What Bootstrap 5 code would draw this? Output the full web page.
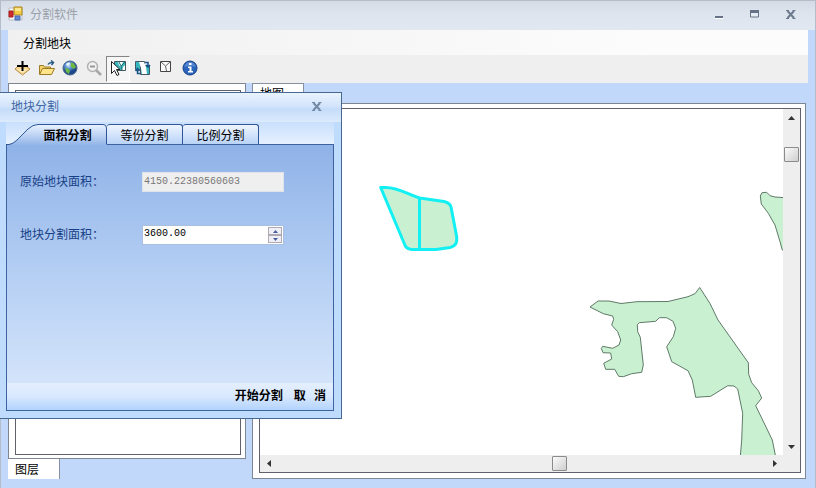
<!DOCTYPE html>
<html lang="zh-CN">
<head>
<meta charset="utf-8">
<meta name="viewport" content="width=device-width, initial-scale=1">
<title>分割软件</title>
<link href="https://cdn.jsdelivr.net/npm/bootstrap@5.3.0/dist/css/bootstrap.min.css" rel="stylesheet">
<style>
body { font-family: "Noto Sans CJK SC", sans-serif; font-size: 12px; line-height: 16px; color: #000; background: #c1d8fb; }
button, input { font: inherit; color: inherit; }
button { border: 0; padding: 0; background: none; }
svg { display: block; }
.app-window { border: 1px solid #b4bdca; padding-bottom: 9px; }
.app-title { height: 29px; padding: 0 6px 3px 7px; background: linear-gradient(#d5dbe5, #dde4ee 40%, #e1e8f1); color: #9a9fa8; }
.app-name { margin-left: 6px; }
.caption-btn { width: 36px; height: 24px; display: flex; align-items: center; justify-content: center; }
.app-content { padding: 0 7px; }
.menu-strip { height: 25px; padding-left: 15px; background: linear-gradient(90deg, #f0f0f0, #fcfcfc 80%); }
.tool-strip { height: 28px; padding: 0 2px; background: #efefef; }
.tool-btn { width: 24px; height: 26px; padding-bottom: 2px; display: flex; align-items: center; justify-content: center; border: 1px solid transparent; }
.tool-btn.pressed { border-color: #858585 #fff #fff #858585; background: #f6f6f6; }
.work-area { gap: 6px; }
.layer-pane { width: 238px; }
.layer-frame { border: 1px solid #7e8694; background: #fff; padding: 6px 4px 3px 6px; }
.inner-frame { border: 1px solid #62606a; background: #fff; }
.dock-tab { height: 20px; width: 52px; padding: 0 7px; text-align: left; background: #fff; border-right: 1px solid #8790a0; }
.map-tab { border: 1px solid #8790a0; border-bottom: 0; padding-bottom: 2px; }
.map-frame { border: 1px solid #7e8694; background: #fff; padding: 4px 4px 5px 6px; margin-right: 2px; }
.map-view { flex: 1 1 0; min-width: 0; min-height: 0; }
.bar-v { width: 17px; background: #eeeeee; }
.bar-h { height: 17px; background: #eeeeee; }
.bar-btn { width: 17px; height: 17px; display: flex; align-items: center; justify-content: center; }
.thumb { width: 15px; height: 15px; border: 1px solid #8b8b8b; border-radius: 1px; background: linear-gradient(135deg, #fafafa, #cfcfcf); }
.thumb-v { margin: 21px auto 0; }
.track-before { flex: 58; }
.track-after { flex: 42; }
.bar-corner { width: 17px; }
.split-dialog { position: absolute; left: 0; top: 92px; width: 342px; border: 1px solid #48698f; border-left: 0; padding: 0 7px 7px 6px; background: #bfdbfd; }
.dialog-title { height: 29px; margin: 0 -7px 0 -6px; padding: 0 19px 3px 11px; background: linear-gradient(#e9f3ff, #d3e5fb 45%, #c5dcf9 55%, #dcebfd); color: #3f66a3; }
.tab-strip { height: 22px; padding-top: 2px; background: linear-gradient(#c9dffc, #e6f1ff); }
.tab-first { width: 101px; margin-bottom: -1px; position: relative; z-index: 1; font-weight: 700; }
.tab-first svg { position: absolute; left: 0; top: 0; }
.tab-first span { position: relative; margin-left: 22px; }
.tab-other { width: 76px; border: 1px solid #2f5797; border-left: 0; border-bottom: 0; border-radius: 3px 3px 0 0; background: linear-gradient(#eef5ff, #b9d3f7); }
.tab-body { min-height: 267px; border: 1px solid #3d63a0; background: linear-gradient(#8fb2e7, #b2cdf3 45%, #d2e3fa 88%); color: #173f86; }
.form-rows { padding: 27px 13px 0; gap: 33px; }
.form-row { height: 20px; }
.form-row label { width: 122px; padding-bottom: 2px; }
.field { width: 142px; height: 20px; border: 1px solid #a9bfe0; background: #fff; }
.field input { border: 0; padding: 0 0 2px 1px; min-width: 0; width: 100%; background: transparent; color: #000; font-family: "Liberation Mono", monospace; font-size: 10px; outline: 0; }
.field.locked { background: #efefef; border-color: #dfe3ea; }
.field.locked input { color: #777; padding-bottom: 0; }
.spin { width: 15px; padding: 1px 1px 1px 0; }
.spin button { flex: 1; border: 1px solid #b0a9b4; background: #eef0f6; display: flex; align-items: center; justify-content: center; }
.dialog-actions { height: 27px; padding: 0 7px 3px; gap: 11px; background: linear-gradient(#e4effe, #d8e8fe 50%, #b2d3fd); color: #000; }
.dialog-actions button { font-weight: 700; white-space: pre; }
</style>
</head>
<body>
<div class="app-window position-relative min-vh-100 d-flex flex-column">
  <header class="app-title d-flex align-items-center">
    <svg width="16" height="16" viewBox="0 0 16 16" aria-hidden="true"><path d="M1 2h13v12H1z" fill="#f5f6f7" stroke="#b9bcc2"/><path d="M6 1h8v8H6z" fill="#f4cc45" stroke="#a98420"/><path d="M7 2h6v3H7z" fill="#ffe68b"/><path d="M1 5h4v6H1z" fill="#cf2929" stroke="#a52020"/><path d="M7 10h5v4H7z" fill="#6289d1" stroke="#466bb3"/></svg>
    <span class="app-name">分割软件</span>
    <div class="ms-auto d-flex">
      <button class="caption-btn" aria-label="最小化"><svg width="10" height="10"><path d="M1 7h8v2H1z" fill="#667386"/><path d="M1 9h8v1H1z" fill="#fff"/></svg></button>
      <button class="caption-btn" aria-label="最大化"><svg width="10" height="8"><path d="M.5 1.5h8v5.500h-8z" fill="#e7edf5" stroke="#667386"/><path d="M0 0h9v3H0z" fill="#667386"/></svg></button>
      <button class="caption-btn" aria-label="关闭"><svg width="10" height="9"><path d="M1.500 1l6.500 7M8 1L1.500 8" stroke="#6d7a8e" stroke-width="2"/><path d="M0 .5h3M6.500 .5h3M0 8.500h3M6.500 8.500h3" stroke="#6d7a8e"/></svg></button>
    </div>
  </header>
  <div class="app-content flex-grow-1 d-flex flex-column">
    <nav class="menu-strip d-flex align-items-center"><button>分割地块</button></nav>
    <div class="tool-strip d-flex align-items-center" role="toolbar">
      <button class="tool-btn" aria-label="添加图层"><svg width="17" height="16"><path d="M1 9l3-3h8l4 3-7.500 6z" fill="#f7d58e" stroke="#b78c4a"/><path d="M3 9h11l-5.500 4z" fill="#ffebb8"/><path d="M8.500 1v10M3 6h11" stroke="#000" stroke-width="2"/></svg></button>
      <button class="tool-btn" aria-label="打开"><svg width="17" height="16"><path d="M1.500 14V5.500h4l1 1.500h6v2" fill="#f4d36c" stroke="#9a7a22"/><path d="M1.500 14.500l3-6h12l-3 6z" fill="#ffe48a" stroke="#9a7a22"/><path d="M10 4.500c1-2 2-2.500 5-2M13 .5l2.500 2L13.500 5" fill="none" stroke="#285b87" stroke-width="1.500"/></svg></button>
      <button class="tool-btn" aria-label="全图"><svg width="16" height="16"><defs><radialGradient id="sea" cx=".4" cy=".3"><stop stop-color="#d8edff"/><stop offset=".5" stop-color="#5b92d2"/><stop offset="1" stop-color="#1c468c"/></radialGradient></defs><circle cx="8" cy="8" r="7" fill="url(#sea)" stroke="#4a6688"/><path d="M9 2.500l3 1 2 3.500-2 2-2-1-1.500-2zM3 8l3 .5 2 2-1 3.500-3-2z" fill="#6db845"/><path d="M4 4l3-1.500 1 1-3 2z" fill="#fff"/></svg></button>
      <button class="tool-btn" aria-label="缩小" disabled><svg width="16" height="16"><circle cx="6.500" cy="6.500" r="5" fill="#f1f1f1" stroke="#b2b2b2" stroke-width="1.500"/><path d="M4 6.500h5" stroke="#999" stroke-width="2"/><path d="M10 10l5 5" stroke="#a7a7a7" stroke-width="2.500"/></svg></button>
      <button class="tool-btn pressed" aria-label="选择要素" aria-pressed="true"><svg width="17" height="16"><path d="M4.500 1.500h11v9h-11z" fill="#3bb8bd" stroke="#44585c"/><path d="M8 2h5l-2 5-2-2zM13 7l2-2v5h-3z" fill="#fff"/><path d="M9 2l2 4 4-4M11 6l1 4" stroke="#1e6b74" fill="none"/><path d="M1.500 1.500v12l3-3 2.500 5 2-1-2.500-5H10z" fill="#fff" stroke="#222"/></svg></button>
      <button class="tool-btn" aria-label="切换选择"><svg width="17" height="16"><path d="M1.500 1.500h9v8h-9z" fill="#35b5bc" stroke="#456"/><path d="M6.500 5.500h9v9h-9z" fill="#35b5bc" stroke="#456"/><path d="M5 2h5l2 5 1 7H8L7 8z" fill="#fff"/><path d="M11 2.500h3v4M12 5l2 2 2-2M6 13.500H3.500V9M1.500 11l2-2.500 2 2.500" fill="none" stroke="#17548a" stroke-width="1.500"/></svg></button>
      <button class="tool-btn" aria-label="清除选择"><svg width="14" height="16"><path d="M1.500 1.500h10v10h-10z" fill="#fafafa" stroke="#444"/><path d="M2 2l4.500 4L11 2M6.500 6l1 5" fill="none" stroke="#666"/></svg></button>
      <button class="tool-btn" aria-label="属性"><svg width="16" height="16"><circle cx="8" cy="8" r="7" fill="#2b64bd" stroke="#173f85"/><path d="M2.500 7a5.500 5 0 0 1 11 0q-5-2-11 0z" fill="#5586d0"/><path d="M7 3h2.500v2H7zM6 6.500h3.500V11H11v1.500H6V11h1.500V8H6z" fill="#fff"/></svg></button>
    </div>
    <main class="work-area flex-grow-1 d-flex">
      <aside class="layer-pane flex-shrink-0 d-flex flex-column">
        <div class="layer-frame flex-grow-1 d-flex"><div class="inner-frame flex-grow-1"></div></div>
        <button class="dock-tab">图层</button>
      </aside>
      <section class="flex-grow-1 d-flex flex-column">
        <button class="dock-tab map-tab">地图</button>
        <div class="map-frame flex-grow-1 d-flex">
          <div class="inner-frame flex-grow-1 d-flex flex-column">
            <div class="flex-grow-1 d-flex">
              <svg class="map-view" viewBox="260 109 523 346" preserveAspectRatio="xMaxYMin slice" role="img" aria-label="地块图">
                <g fill="#c9f1d1" stroke="#5f7a68" stroke-width="1" stroke-linejoin="round">
                  <path d="M590 307L598 301 609 301 621 303.500 637 301.700 668 301.500 688 296.700 695 293.700 699.700 287.500 710 303.500 718 320 748.300 362.700 748.700 374.300 751.700 382.700 758.300 390.700 761.700 398 755.700 405.700 772.300 440 775.700 457H740.300L741.700 440 742.700 413.300 737.700 389 734 386 727.700 385.700 710.700 396.300 695.700 397.300 692.300 380 688 370.700 671.700 361.700 666.700 346.700 673.300 336.700 675.700 328.300 673 321.300 666.700 317.700 659.300 317.700 655.700 321.300 639.300 322.700 637.300 324.700 637.700 331.700 640.300 337.300 643.300 365 641.700 372.300 631.700 373.700 623.300 376.700 618.700 376.300 614.700 369.300 605.700 369.300 603.700 363.300 611.700 359 610.700 353 603 352.700 601.300 348.300 602.700 346.300 612.700 348.300 619 345 620.700 340 617.700 331.700 611.700 325 613.700 319.300 612.700 316 603.300 313.700z"/>
                  <path d="M785 197.700L775 197 770 195.700 766.700 192.300 762 192.700 760.300 196 761.300 204 768.300 213.300 775 225 780 241.700 782.300 250 785 251z"/>
                </g>
                <path d="M380.700 187.500H386C398 187.500 407 194 419.500 198L444 201.500Q450 203 451 207L456.700 236.700V241Q456 246 450 247.500L436 249.500H412Q407 249 405.300 246zM419.500 198V249.500" fill="#c9f1d1" stroke="#12f0f4" stroke-width="3" stroke-linejoin="round"/>
              </svg>
              <div class="bar-v d-flex flex-column">
                <button class="bar-btn" aria-label="向上"><svg width="7" height="4"><path d="M0 4l3.500-4L7 4z" fill="#333"/></svg></button>
                <div class="thumb thumb-v"></div>
                <button class="bar-btn mt-auto" aria-label="向下"><svg width="7" height="4"><path d="M0 0l3.500 4L7 0z" fill="#333"/></svg></button>
              </div>
            </div>
            <div class="bar-h d-flex align-items-center">
              <button class="bar-btn" aria-label="向左"><svg width="4" height="7"><path d="M4 0L0 3.500 4 7z" fill="#333"/></svg></button>
              <div class="track-before"></div>
              <div class="thumb"></div>
              <div class="track-after"></div>
              <button class="bar-btn" aria-label="向右"><svg width="4" height="7"><path d="M0 0l4 3.500L0 7z" fill="#333"/></svg></button>
              <div class="bar-corner"></div>
            </div>
          </div>
        </div>
      </section>
    </main>
  </div>
</div>

<div class="split-dialog" role="dialog" aria-labelledby="dialogTitle">
  <div class="dialog-title d-flex align-items-center justify-content-between">
    <span id="dialogTitle">地块分割</span>
    <button aria-label="关闭"><svg width="10" height="9"><path d="M1.500 1l6.500 7M8 1L1.500 8" stroke="#7389a6" stroke-width="2"/><path d="M0 .5h3M6.500 .5h3M0 8.500h3M6.500 8.500h3" stroke="#7389a6"/></svg></button>
  </div>
  <div class="tab-strip d-flex" role="tablist">
    <button class="tab-first" role="tab" aria-selected="true">
      <svg width="101" height="21" aria-hidden="true"><defs><linearGradient id="tabFill" x2="0" y2="1"><stop stop-color="#eaf3ff"/><stop offset="1" stop-color="#93b5e8"/></linearGradient></defs><path d="M0 20.500H3Q7 20 11 16L22 5Q27 .5 32 .5H97Q100.500 .5 100.500 4V21H0z" fill="url(#tabFill)"/><path d="M0 20.500H3Q7 20 11 16L22 5Q27 .5 32 .5H97Q100.500 .5 100.500 4V20" fill="none" stroke="#2f5797"/></svg>
      <span>面积分割</span>
    </button>
    <button class="tab-other" role="tab" aria-selected="false">等份分割</button>
    <button class="tab-other" role="tab" aria-selected="false">比例分割</button>
  </div>
  <form class="tab-body d-flex flex-column">
    <div class="form-rows d-flex flex-column">
      <div class="form-row d-flex align-items-center">
        <label for="originalArea">原始地块面积：</label>
        <div class="field locked d-flex"><input id="originalArea" type="text" value="4150.22380560603" readonly></div>
      </div>
      <div class="form-row d-flex align-items-center">
        <label for="splitArea">地块分割面积：</label>
        <div class="field d-flex">
          <input id="splitArea" type="text" inputmode="decimal" value="3600.00">
          <div class="spin d-flex flex-column flex-shrink-0">
            <button type="button" aria-label="增加"><svg width="5" height="3"><path d="M0 3l2.500-3L5 3z" fill="#4a5a9c"/></svg></button>
            <button type="button" aria-label="减少"><svg width="5" height="3"><path d="M0 0l2.500 3L5 0z" fill="#4a5a9c"/></svg></button>
          </div>
        </div>
      </div>
    </div>
    <div class="dialog-actions mt-auto d-flex align-items-center justify-content-end">
      <button type="button">开始分割</button>
      <button type="button">取   消</button>
    </div>
  </form>
</div>
<script src="https://cdn.jsdelivr.net/npm/bootstrap@5.3.0/dist/js/bootstrap.bundle.min.js"></script>
</body>
</html>
